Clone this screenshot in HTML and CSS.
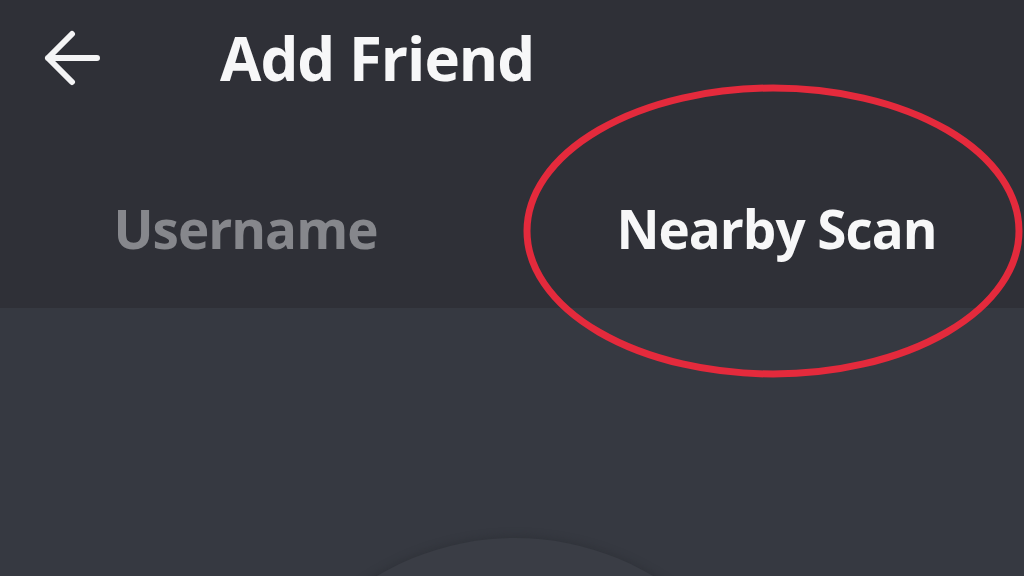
FILE: index.html
```html
<!DOCTYPE html>
<html lang="en">
<head>
<meta charset="UTF-8">
<meta name="viewport" content="width=device-width, initial-scale=1.0">
<title>Add Friend</title>
<link rel="stylesheet" href="styles.css">
</head>
<body>
<div class="top">
  <header class="bar">
    <button class="back" aria-label="Back">
      <svg width="58" height="56" viewBox="0 0 58 56">
        <path d="M54 28H5M29 4L5 28l24 24" fill="none" stroke="#f4f4f5" stroke-width="6" stroke-linecap="round" stroke-linejoin="round"/>
      </svg>
    </button>
    <h1>Add Friend</h1>
  </header>

  <nav class="tabs">
    <div class="tab">Username</div>
    <div class="tab active">Nearby Scan</div>
  </nav>
</div>

<main class="scan">
  <div class="radar"></div>
</main>

<!-- red highlight drawn over the tab -->
<svg class="mark" width="506" height="300" viewBox="0 0 506 300">
  <ellipse cx="253" cy="149" rx="246" ry="143" fill="none" stroke="#e42a3c" stroke-width="7"/>
</svg>
</body>
</html>
```

FILE: styles.css
```css
body {
  margin: 0;
  width: 1024px;
  height: 576px;
  overflow: hidden;
  background: #363941;
  font-family: 'Open Sans', 'Noto Sans', sans-serif;
  color: #fff;
  position: relative;
}

.top {
  background: #2f3037;
  height: 308px;
}

.bar {
  display: flex;
  align-items: center;
  height: 116px;
  padding-left: 43px;
}

.back {
  background: none;
  border: 0;
  padding: 0;
  display: flex;
  cursor: pointer;
}

h1 {
  margin: 0 0 0 119px;
  font-size: 60px;
  font-weight: 700;
  letter-spacing: -1px;
  color: #f7f7f8;
}

.tabs {
  display: grid;
  grid-template-columns: 1fr 1fr;
  align-items: center;
  height: 192px;
  margin: 0 -18px 0 -20px;
}

.tab {
  text-align: center;
  font-size: 53px;
  font-weight: 700;
  letter-spacing: -1px;
  color: #86878c;
  padding-top: 32px;
}

.tab.active {
  color: #f7f7f8;
}

.scan {
  height: 268px;
  overflow: hidden;
}

.radar {
  width: 540px;
  height: 540px;
  margin: 230px 0 0 245px;
  border-radius: 50%;
  background: #3a3d45;
  box-shadow: 0 0 6px 3px #31343b;
}

.mark {
  position: absolute;
  left: 520px;
  top: 82px;
}
```
